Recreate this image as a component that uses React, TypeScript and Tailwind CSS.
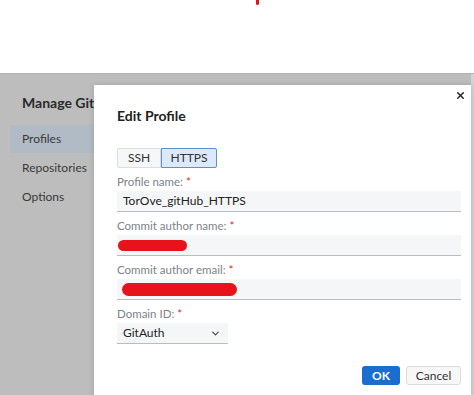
import React from 'react'
import { ChevronDown, X } from 'lucide-react'

function Field({ label, children }: { label: string; children: React.ReactNode }) {
  return (
    <div className="mt-[6px]">
      <div className="h-[16px] text-[11.5px] leading-[16px] text-[#7d828a]">
        {label}
        <span className="text-[#d9302c]">*</span>
      </div>
      <div className="mt-[1px]">{children}</div>
    </div>
  )
}

function App() {
  return (
    <div
      className="relative w-[474px] h-[395px] overflow-hidden bg-white"
      style={{ fontFamily: 'Lato, "Noto Sans", sans-serif' }}
    >
      {/* red mark from the annotation above */}
      <div className="absolute left-[256px] top-0 h-[5px] w-[3px] rounded-b-full bg-[#e3141c]" />

      <div className="h-[73px]" />

      {/* dimmed app behind the dialog */}
      <div className="flex h-[322px] border-t border-[#b3b3b3] bg-[#bdbdbd]">
        <div className="w-[94px] overflow-hidden pt-[19px]">
          <div className="pl-[22px] text-[14px] leading-[20px] font-bold text-[#2b2b2b] whitespace-nowrap">
            Manage Git C
          </div>
          <div className="mt-[12px] flex flex-col text-[12px] text-[#3a3a3a]">
            <div className="ml-[10px] h-[28px] flex items-center pl-[12px] bg-[#b1bbc6]">Profiles</div>
            <div className="h-[29px] flex items-center pl-[22px]">Repositories</div>
            <div className="h-[29px] flex items-center pl-[22px]">Options</div>
          </div>
        </div>
        <div className="flex-1" />
        <div className="w-[3px] bg-[#d4d4d4]" />
      </div>

      {/* dialog */}
      <div className="absolute left-[94px] top-[85px] w-[377px] h-[320px] bg-white shadow-[0_0_6px_rgba(0,0,0,0.15)] pl-[23px] pr-[10px]">
        <button className="absolute right-[5px] top-[5px] text-[#222]">
          <X size={11} strokeWidth={3} />
        </button>

        <div className="pt-[21px] text-[14px] leading-[20px] font-bold text-[#222]">Edit Profile</div>

        <div className="mt-[22px] flex text-[12px] text-[#333]">
          <div className="h-[20px] w-[44px] flex items-center justify-center border border-[#dadde1] bg-[#f6f7f8] rounded-l-[2px]">
            SSH
          </div>
          <div className="h-[20px] w-[56px] flex items-center justify-center border border-[#5d8fce] bg-[#dce9f8] rounded-r-[2px]">
            HTTPS
          </div>
        </div>

        <Field label="Profile name: ">
          <div className="h-[21px] flex items-center px-[6px] bg-[#f5f6f7] border-b border-[#b9bdc2] text-[12px] text-[#222]">
            TorOve_gitHub_HTTPS
          </div>
        </Field>

        <Field label="Commit author name: ">
          <div className="h-[21px] flex items-center px-[1px] bg-[#f5f6f7] border-b border-[#b9bdc2]">
            <div className="h-[11px] w-[69px] rounded-full bg-[#e8121b]" />
          </div>
        </Field>

        <Field label="Commit author email: ">
          <div className="h-[21px] flex items-center px-[5px] bg-[#f5f6f7] border-b border-[#b9bdc2]">
            <div className="h-[13px] w-[115px] rounded-full bg-[#e8121b]" />
          </div>
        </Field>

        <Field label="Domain ID: ">
          <div className="h-[21px] w-[111px] flex items-center justify-between pl-[6px] pr-[7px] bg-[#f5f6f7] border-b border-[#b9bdc2] text-[12px] text-[#222]">
            GitAuth
            <ChevronDown size={11} strokeWidth={2.5} className="text-[#444]" />
          </div>
        </Field>

        <div className="mt-[22px] flex justify-end gap-[6px] text-[12px]">
          <button className="h-[19px] w-[38px] rounded-[3px] bg-[#1b6dd0] text-white font-bold">OK</button>
          <button className="h-[19px] w-[55px] rounded-[3px] border border-[#dcdcdc] bg-[#f7f7f7] text-[#333]">
            Cancel
          </button>
        </div>

        <svg className="absolute right-[1px] bottom-[-1px]" width="8" height="8" viewBox="0 0 8 8">
          <circle cx="6" cy="2" r="0.8" fill="#999" />
          <circle cx="4" cy="4" r="0.8" fill="#999" />
          <circle cx="6" cy="4" r="0.8" fill="#999" />
          <circle cx="2" cy="6" r="0.8" fill="#999" />
          <circle cx="4" cy="6" r="0.8" fill="#999" />
          <circle cx="6" cy="6" r="0.8" fill="#999" />
        </svg>
      </div>
    </div>
  )
}

export default App
